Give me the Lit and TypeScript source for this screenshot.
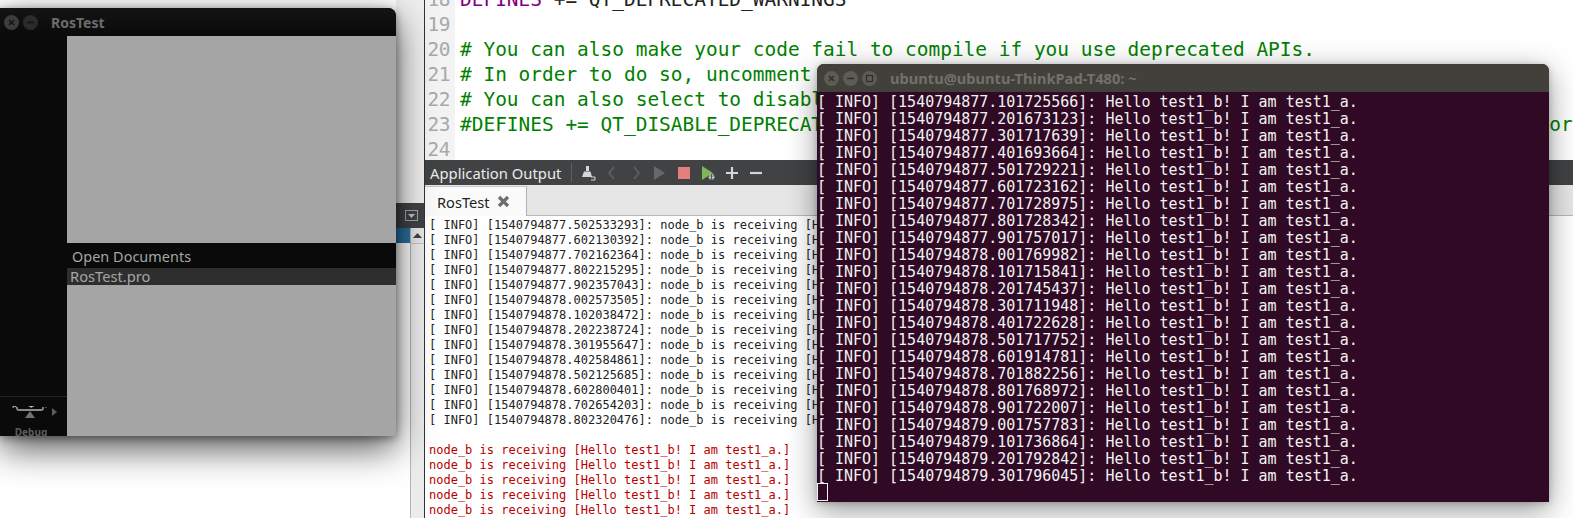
import { LitElement, html, css, svg } from "lit";
import { customElement } from "lit/decorators.js";

const TERM = [
  "1540794877.101725566","1540794877.201673123","1540794877.301717639","1540794877.401693664",
  "1540794877.501729221","1540794877.601723162","1540794877.701728975","1540794877.801728342",
  "1540794877.901757017","1540794878.001769982","1540794878.101715841","1540794878.201745437",
  "1540794878.301711948","1540794878.401722628","1540794878.501717752","1540794878.601914781",
  "1540794878.701882256","1540794878.801768972","1540794878.901722007","1540794879.001757783",
  "1540794879.101736864","1540794879.201792842","1540794879.301796045",
];
const OUT = [
  "1540794877.502533293","1540794877.602130392","1540794877.702162364","1540794877.802215295",
  "1540794877.902357043","1540794878.002573505","1540794878.102038472","1540794878.202238724",
  "1540794878.301955647","1540794878.402584861","1540794878.502125685","1540794878.602800401",
  "1540794878.702654203","1540794878.802320476",
];
const CODE: [string, any][] = [
  ["18", html`<span class="kw">DEFINES</span> += QT_DEPRECATED_WARNINGS`],
  ["19", ""],
  ["20", html`<span class="cm"># You can also make your code fail to compile if you use deprecated APIs.</span>`],
  ["21", html`<span class="cm"># In order to do so, uncomment the following line.</span>`],
  ["22", html`<span class="cm"># You can also select to disable deprecated APIs only up to a certain version of Qt.</span>`],
  ["23", html`<span class="cm">#DEFINES += QT_DISABLE_DEPRECATED_BEFORE=0x060000      # disables all the APIs deprecated before Qt 6.0.0</span>`],
  ["24", ""],
];

const I = (w: number, h: number, body: any) =>
  html`<svg width=${w} height=${h} viewBox="0 0 ${w} ${h}">${body}</svg>`;

@customElement("app-root")
export class AppRoot extends LitElement {
  static styles = css`
    :host { display: block; width: 1573px; height: 518px; }
    .desk { position: relative; width: 1573px; height: 518px; overflow: hidden; background: #fff; display: flex; padding-left: 396px; box-sizing: border-box; font-family: "Noto Sans", sans-serif; }

    .strip { width: 28px; flex: none; display: flex; flex-direction: column; }
    .strip-top { height: 203px; background: #efefef; }
    .strip-head { height: 25px; background: #404244; display: flex; align-items: center; justify-content: flex-end; padding-right: 6px; box-sizing: border-box; }
    .strip-btn { width: 11px; height: 9px; border: 1px solid #a8a8a8; display: flex; align-items: center; justify-content: center; }
    .strip-body { flex: 1; display: flex; }
    .tree { width: 14px; background: #fff; }
    .tree-sel { height: 15px; background: #2a6f9e; }
    .scroll { width: 14px; background: #ececec; border-left: 1px solid #b4b4b4; box-sizing: border-box; }
    .scroll-up { height: 15px; border-bottom: 1px solid #c4c4c4; display: flex; align-items: center; justify-content: center; background: #e8e8e8; }

    .main { flex: 1; min-width: 0; border-left: 1px solid #333; display: flex; flex-direction: column; }
    .editor { height: 160px; overflow: hidden; background: #fff; }
    .code-in { margin-top: -13px; }
    .row { display: flex; height: 25px; line-height: 25px; font-family: "DejaVu Sans Mono", monospace; font-size: 19.47px; color: #222; }
    .code { white-space: pre; }
    .num { width: 30px; flex: none; box-sizing: border-box; text-align: right; padding-right: 5px; margin-right: 5px; background: #f3f3f3; color: #a9a9a9; letter-spacing: -0.4px; }
    .kw { color: #800080; }
    .cm { color: #008000; }

    .bar { height: 25px; background: #404244; display: flex; align-items: center; padding-left: 5px; flex: none; }
    .bar-label { color: #eaeaea; font-size: 14.8px; width: 141px; flex: none; white-space: nowrap; }
    .bar-sep { width: 1px; height: 19px; background: #5d5f61; margin-right: 4px; }
    .tool { width: 24px; height: 25px; display: flex; align-items: center; justify-content: center; }

    .tabs { height: 31px; background: #e6e6e6; border-bottom: 1px solid #b8b8b8; box-sizing: border-box; display: flex; flex: none; }
    .tab { width: 102px; height: 30px; margin-top: 1px; background: #fafafa; border-right: 1px solid #b0b0b0; border-top: 1px solid #c8c8c8; box-sizing: border-box; display: flex; align-items: center; padding-left: 12px; font-size: 14.6px; color: #222; gap: 8px; }

    .out { flex: 1; background: #fff; padding: 2px 0 0 4px; font-family: "DejaVu Sans Mono", monospace; font-size: 12px; line-height: 15px; color: #222; overflow: hidden; }
    .ln { height: 15px; white-space: pre; }
    .err { color: #b80000; }

    .win-l { position: absolute; left: 0; top: 8px; width: 396px; height: 428px; border-radius: 0 8px 0 0; background: #0a0a0a; box-shadow: 0 12px 36px rgba(0,0,0,.68), 0 2px 8px rgba(0,0,0,.4); display: flex; flex-direction: column; overflow: hidden; }
    .wl-title { height: 28px; flex: none; background: linear-gradient(#141414, #0a0a0a); display: flex; align-items: center; padding-left: 4px; color: #6c6c6c; font-weight: 700; font-size: 14px; }
    .wbtn { width: 15px; height: 15px; border-radius: 50%; flex: none; display: flex; align-items: center; justify-content: center; }
    .wl-close { background: #3d3d3d; margin-right: 4px; }
    .wl-min { background: #2b2b2b; margin-right: 13px; }
    .wl-body { flex: 1; min-height: 0; display: flex; }
    .side { width: 67px; flex: none; display: flex; flex-direction: column; justify-content: flex-end; background: #0a0a0a; }
    .kit { height: 40px; flex: none; box-sizing: border-box; border-top: 1px solid #242424; overflow: hidden; display: flex; flex-direction: column; align-items: center; position: relative; }
    .kit-name { height: 4px; margin-top: 7px; overflow: hidden; font-size: 9px; line-height: 11px; color: #c4c4c4; margin-right: 7px; flex: none; letter-spacing: .6px; }
    .kit-icon { flex: none; margin-top: -1px; margin-right: 7px; display: block; }
    .kit-arrow { position: absolute; left: 52px; top: 11px; }
    .kit-mode { font-size: 10px; font-weight: 700; color: #5c5c5c; line-height: 13px; margin-top: 7px; margin-right: 5px; flex: none; }
    .panes { flex: 1; min-width: 0; background: #a5a5a5; display: flex; flex-direction: column; }
    .pane-top { height: 207px; flex: none; }
    .pane-head { height: 25px; flex: none; background: #0a0a0a; color: #a6a6a6; font-size: 14.4px; line-height: 28px; padding-left: 5px; letter-spacing: .05px; box-sizing: border-box; }
    .pane-row { height: 17px; flex: none; background: #2e2e2e; color: #a6a6a6; font-size: 14.7px; line-height: 16px; padding-left: 3px; }

    .term-wrap { position: absolute; left: 817px; top: 64px; width: 732px; height: 438px; border-radius: 7px 7px 0 0; box-shadow: 0 8px 30px rgba(0,0,0,.42), 0 1px 6px rgba(0,0,0,.2); display: flex; flex-direction: column; overflow: hidden; background: #300a24; }
    .t-title { height: 28px; flex: none; background: #41403b; display: flex; align-items: center; padding-left: 7px; gap: 4px; color: #72716b; font-weight: 700; font-size: 14.65px; }
    .t-btn { background: #5c5b56; }
    .t-name { margin-left: 9px; white-space: nowrap; }
    .t-body { flex: 1; font-family: "DejaVu Sans Mono", monospace; font-size: 14.98px; line-height: 17px; color: #f2f2f2; padding-top: 2px; }
    .t-ln { height: 17px; white-space: pre; }
    .cursor { width: 11px; height: 18px; margin-top: -2px; box-sizing: border-box; border: 1px solid #f2f2f2; }
  `;

  tool(body: any, w = 16, h = 16) {
    return html`<div class="tool">${I(w, h, body)}</div>`;
  }

  render() {
    const cross = (c: string) => svg`<path d="M5 5l5 5M10 5l-5 5" stroke=${c} stroke-width="1.4" fill="none"/>`;
    const dash = (c: string) => svg`<path d="M4 7.5h7" stroke=${c} stroke-width="1.4" fill="none"/>`;
    return html`
      <div class="desk">
        <div class="strip">
          <div class="strip-top"></div>
          <div class="strip-head"><div class="strip-btn">${I(7, 4, svg`<path d="M0 0h7L3.5 4z" fill="#c8c8c8"/>`)}</div></div>
          <div class="strip-body">
            <div class="tree"><div class="tree-sel"></div></div>
            <div class="scroll"><div class="scroll-up">${I(9, 5, svg`<path d="M4.5 0L9 5H0z" fill="#444"/>`)}</div></div>
          </div>
        </div>
        <div class="main">
          <div class="editor"><div class="code-in">
            ${CODE.map(([n, c]) => html`<div class="row"><span class="num">${n}</span><span class="code">${c}</span></div>`)}
          </div></div>
          <div class="bar">
            <span class="bar-label">Application Output</span>
            <span class="bar-sep"></span>
            ${this.tool(svg`<path d="M6 1h3v5H6z" fill="#d6d6d6"/><path d="M4 6.5h6.5L12 12H2z" fill="#d6d6d6"/><path d="M11 12h4v3h-4" fill="none" stroke="#d6d6d6" stroke-width="1"/>`)}
            ${this.tool(svg`<path d="M10 2L5 8l5 6" fill="none" stroke="#5f6163" stroke-width="1.6"/>`)}
            ${this.tool(svg`<path d="M6 2l5 6-5 6" fill="none" stroke="#5f6163" stroke-width="1.6"/>`)}
            ${this.tool(svg`<path d="M2 1l11 7-11 7z" fill="#66686a"/>`)}
            ${this.tool(svg`<rect x="2" y="2" width="12" height="12" fill="#e57f7f"/>`)}
            ${this.tool(svg`<path d="M2 1l11 7-11 7z" fill="#7fb65c"/><circle cx="11.5" cy="12" r="3" fill="#d4d4d4"/><path d="M8 11h7M8 14h7M11.5 9v6" stroke="#404244" stroke-width=".8"/>`)}
            ${this.tool(svg`<path d="M8 2v12M2 8h12" stroke="#d6d6d6" stroke-width="2.2"/>`)}
            ${this.tool(svg`<path d="M2 8h12" stroke="#d6d6d6" stroke-width="2.2"/>`)}
          </div>
          <div class="tabs">
            <div class="tab"><span>RosTest</span>${I(13, 13, svg`<path d="M2 2l9 9M11 2l-9 9" stroke="#6e6e6e" stroke-width="3.2"/>`)}</div>
          </div>
          <div class="out">
            ${OUT.map((t) => html`<div class="ln">[ INFO] [${t}]: node_b is receiving [Hello test1_b! I am test1_a.]</div>`)}
            <div class="ln"></div>
            ${[0, 1, 2, 3, 4].map(() => html`<div class="ln err">node_b is receiving [Hello test1_b! I am test1_a.]</div>`)}
          </div>
        </div>

        <div class="win-l">
          <div class="wl-title">
            <div class="wbtn wl-close">${I(15, 15, cross("#111"))}</div>
            <div class="wbtn wl-min">${I(15, 15, dash("#111"))}</div>
            <span>RosTest</span>
          </div>
          <div class="wl-body">
            <div class="side">
              <div class="kit">
                <div class="kit-name">RosTest</div>
                <svg class="kit-icon" width="30" height="12" viewBox="0 0 30 12"><path d="M2 0v1.5q0 1.5 2 1.5h22q2 0 2-1.5V0" fill="none" stroke="#8a8a8a" stroke-width="1.8"/><path d="M15 4l5 7H10z" fill="#707070"/></svg>
                <svg class="kit-arrow" width="5" height="8" viewBox="0 0 5 8"><path d="M0 0l5 4-5 4z" fill="#5c5c5c"/></svg>
                <div class="kit-mode">Debug</div>
              </div>
            </div>
            <div class="panes">
              <div class="pane-top"></div>
              <div class="pane-head">Open Documents</div>
              <div class="pane-row">RosTest.pro</div>
            </div>
          </div>
        </div>

        <div class="term-wrap">
          <div class="t-title">
            <div class="wbtn t-btn">${I(15, 15, cross("#2e2d29"))}</div>
            <div class="wbtn t-btn">${I(15, 15, dash("#2e2d29"))}</div>
            <div class="wbtn t-btn">${I(15, 15, svg`<rect x="4.5" y="4.5" width="6" height="6" fill="none" stroke="#2e2d29" stroke-width="1.2"/>`)}</div>
            <span class="t-name">ubuntu@ubuntu-ThinkPad-T480: ~</span>
          </div>
          <div class="t-body">
            ${TERM.map((t) => html`<div class="t-ln">[ INFO] [${t}]: Hello test1_b! I am test1_a.</div>`)}
            <div class="cursor"></div>
          </div>
        </div>
      </div>
    `;
  }
}
